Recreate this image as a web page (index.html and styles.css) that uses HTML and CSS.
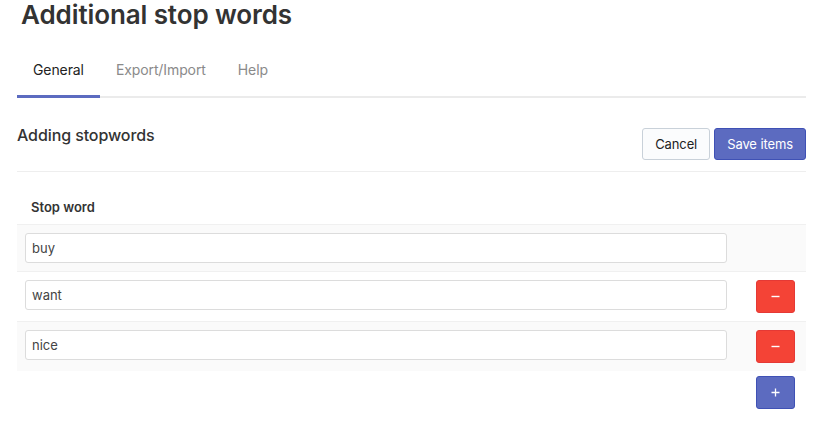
FILE: index.html
```html
<!DOCTYPE html>
<html lang="en">
<head>
<meta charset="utf-8">
<title>Additional stop words</title>
<link rel="stylesheet" href="styles.css">
</head>
<body>
<div class="page">
  <h1 class="title">Additional stop words</h1>
  <nav class="tabs">
    <a class="tab tab-active">General</a>
    <a class="tab">Export/Import</a>
    <a class="tab">Help</a>
  </nav>
  <section class="section">
    <div class="section-head">
      <h2 class="section-title">Adding stopwords</h2>
      <div class="actions">
        <button class="btn btn-default">Cancel</button>
        <button class="btn btn-primary">Save items</button>
      </div>
    </div>
    <table class="words">
      <thead>
        <tr><th class="col-word">Stop word</th><th class="col-act"></th></tr>
      </thead>
      <tbody>
        <tr class="row-odd">
          <td class="col-word"><input class="field" type="text" value="buy"></td>
          <td class="col-act"></td>
        </tr>
        <tr>
          <td class="col-word"><input class="field" type="text" value="want"></td>
          <td class="col-act"><button class="icon-btn icon-btn-danger" aria-label="Remove"><svg width="9" height="9" viewBox="0 0 9 9"><path d="M0.5 4.5H8.5" stroke="#fff" stroke-width="1.4"/></svg></button></td>
        </tr>
        <tr class="row-odd">
          <td class="col-word"><input class="field" type="text" value="nice"></td>
          <td class="col-act"><button class="icon-btn icon-btn-danger" aria-label="Remove"><svg width="9" height="9" viewBox="0 0 9 9"><path d="M0.5 4.5H8.5" stroke="#fff" stroke-width="1.4"/></svg></button></td>
        </tr>
      </tbody>
    </table>
    <div class="add-row">
      <button class="icon-btn icon-btn-primary" aria-label="Add"><svg width="9" height="9" viewBox="0 0 9 9"><path d="M0.5 4.5H8.5M4.5 0.5V8.5" stroke="#fff" stroke-width="1.3"/></svg></button>
    </div>
  </section>
</div>
</body>
</html>
```

FILE: styles.css
```css
* { box-sizing: border-box; }
html, body { margin: 0; padding: 0; background: #fff; }
body {
  font-family: Inter, "Noto Sans", "Liberation Sans", sans-serif;
  color: #333;
  -webkit-font-smoothing: antialiased;
}
.page {
  padding: 0 13px 0 17px;
}
.title {
  margin: 0 0 0 4px;
  font-size: 26px;
  line-height: 30px;
  font-weight: 600;
  color: #333;
  letter-spacing: -0.1px;
}
.tabs {
  display: flex;
  margin-top: 15px;
  box-shadow: inset 0 -2px 0 #ebebeb;
}
.tab {
  display: block;
  padding: 15px 16px 15px;
  border-bottom: 3px solid transparent;
  font-size: 14px;
  line-height: 20px;
  color: #8a8a8a;
  letter-spacing: -0.1px;
}
.tab-active {
  color: #222;
  border-bottom-color: #5c6bc0;
}
.section-head {
  display: flex;
  justify-content: space-between;
  align-items: flex-start;
  padding: 25px 0 11px;
  border-bottom: 1px solid #eeeeee;
}
.section-title {
  margin: 0;
  font-size: 16px;
  line-height: 24px;
  font-weight: 500;
  color: #333;
  letter-spacing: -0.1px;
}
.actions {
  display: flex;
  gap: 4px;
  margin-top: 5px;
}
.btn {
  height: 32px;
  border-radius: 3px;
  font-family: inherit;
  font-size: 13px;
  letter-spacing: -0.1px;
  padding: 0 12px;
  white-space: nowrap;
  cursor: pointer;
}
.btn-default {
  background: #fbfcfd;
  border: 1px solid #c9d1d9;
  color: #222;
}
.btn-primary {
  background: #5c6bc0;
  border: 1px solid #3f51b5;
  color: #fff;
}
.words {
  width: 100%;
  border-collapse: collapse;
  margin-top: 18px;
}
.words th {
  text-align: left;
  font-size: 13px;
  line-height: 18px;
  font-weight: 600;
  color: #333;
  padding: 8px 14px 8px;
}
.words td {
  padding: 8px;
  border-top: 1px solid #f0f0f0;
  vertical-align: top;
}
.row-odd { background: #fafafa; }
.words td.col-act {
  width: 71px;
  padding-right: 11px;
  text-align: right;
}
.field {
  display: block;
  width: 100%;
  height: 30px;
  border: 1px solid #dcdcdc;
  border-radius: 3px;
  background: #fff;
  padding: 0 6px;
  font-family: inherit;
  font-size: 13px;
  color: #444;
}
.icon-btn {
  display: inline-flex;
  align-items: center;
  justify-content: center;
  width: 39px;
  height: 33px;
  border-radius: 3px;
  padding: 0;
  vertical-align: top;
  cursor: pointer;
}
.icon-btn-danger {
  background: #f44336;
  border: 1px solid #e53935;
}
.icon-btn-primary {
  background: #5c6bc0;
  border: 1px solid #3f51b5;
}
.add-row {
  display: flex;
  justify-content: flex-end;
  padding: 5px 11px 0 0;
}
```
